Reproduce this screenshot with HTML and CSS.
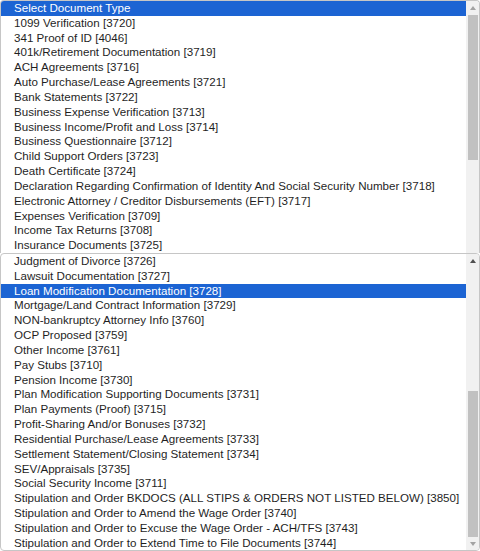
FILE: index.html
```html
<!DOCTYPE html>
<html>
<head>
<meta charset="utf-8">
<link rel="stylesheet" href="styles.css">
</head>
<body>
<div class="page">
  <div class="box box-top">
    <ul class="list" role="listbox">
      <li class="opt sel">Select Document Type</li>
      <li class="opt">1099 Verification [3720]</li>
      <li class="opt">341 Proof of ID [4046]</li>
      <li class="opt">401k/Retirement Documentation [3719]</li>
      <li class="opt">ACH Agreements [3716]</li>
      <li class="opt">Auto Purchase/Lease Agreements [3721]</li>
      <li class="opt">Bank Statements [3722]</li>
      <li class="opt">Business Expense Verification [3713]</li>
      <li class="opt">Business Income/Profit and Loss [3714]</li>
      <li class="opt">Business Questionnaire [3712]</li>
      <li class="opt">Child Support Orders [3723]</li>
      <li class="opt">Death Certificate [3724]</li>
      <li class="opt">Declaration Regarding Confirmation of Identity And Social Security Number [3718]</li>
      <li class="opt">Electronic Attorney / Creditor Disbursements (EFT) [3717]</li>
      <li class="opt">Expenses Verification [3709]</li>
      <li class="opt">Income Tax Returns [3708]</li>
      <li class="opt">Insurance Documents [3725]</li>
    </ul>
    <div class="scrollbar">
      <div class="sb-btn"><span class="arrow up disabled"></span></div>
      <div class="thumb thumb-top"></div>
      <div class="sb-fill"></div>
    </div>
  </div>
  <div class="box box-bottom">
    <ul class="list" role="listbox">
      <li class="opt">Judgment of Divorce [3726]</li>
      <li class="opt">Lawsuit Documentation [3727]</li>
      <li class="opt sel">Loan Modification Documentation [3728]</li>
      <li class="opt">Mortgage/Land Contract Information [3729]</li>
      <li class="opt">NON-bankruptcy Attorney Info [3760]</li>
      <li class="opt">OCP Proposed [3759]</li>
      <li class="opt">Other Income [3761]</li>
      <li class="opt">Pay Stubs [3710]</li>
      <li class="opt">Pension Income [3730]</li>
      <li class="opt">Plan Modification Supporting Documents [3731]</li>
      <li class="opt">Plan Payments (Proof) [3715]</li>
      <li class="opt">Profit-Sharing And/or Bonuses [3732]</li>
      <li class="opt">Residential Purchase/Lease Agreements [3733]</li>
      <li class="opt">Settlement Statement/Closing Statement [3734]</li>
      <li class="opt">SEV/Appraisals [3735]</li>
      <li class="opt">Social Security Income [3711]</li>
      <li class="opt">Stipulation and Order BKDOCS (ALL STIPS &amp; ORDERS NOT LISTED BELOW) [3850]</li>
      <li class="opt">Stipulation and Order to Amend the Wage Order [3740]</li>
      <li class="opt">Stipulation and Order to Excuse the Wage Order - ACH/TFS [3743]</li>
      <li class="opt">Stipulation and Order to Extend Time to File Documents [3744]</li>
    </ul>
    <div class="scrollbar">
      <div class="sb-btn"><span class="arrow up"></span></div>
      <div class="sb-fill"></div>
      <div class="thumb thumb-bottom"></div>
      <div class="sb-btn"><span class="arrow down disabled"></span></div>
    </div>
  </div>
</div>
</body>
</html>
```

FILE: styles.css
```css
* {
  box-sizing: border-box;
}

html, body {
  margin: 0;
  padding: 0;
  background: #ffffff;
}

body {
  font-family: "Liberation Sans", Arial, sans-serif;
  font-size: 11.6px;
  color: #1f1f1f;
}

.page {
  width: 480px;
  height: 551px;
  display: flex;
  flex-direction: column;
  overflow: hidden;
}

.box {
  display: flex;
  border: 1px solid #c6c6c6;
  background: #ffffff;
  overflow: hidden;
}

.box-top {
  height: 253px;
  border-bottom: none;
  border-radius: 4px 4px 0 0;
}

.box-bottom {
  height: 298px;
  border-radius: 4px;
}

.list {
  list-style: none;
  margin: 0;
  padding: 0;
  flex: 1;
  min-width: 0;
  overflow: hidden;
}

.opt {
  height: 14.84px;
  line-height: 14.84px;
  padding-left: 13px;
  white-space: nowrap;
  overflow: hidden;
}

.opt.sel {
  background: #1c64d3;
  color: #ffffff;
}

.scrollbar {
  width: 13px;
  flex: none;
  background: #f1f1f1;
  display: flex;
  flex-direction: column;
}

.sb-btn {
  height: 13px;
  flex: none;
  display: flex;
  align-items: center;
  justify-content: center;
}

.arrow {
  width: 0;
  height: 0;
  border-left: 3.5px solid transparent;
  border-right: 3.5px solid transparent;
}

.arrow.up {
  border-bottom: 4px solid #505050;
}

.arrow.down {
  border-top: 4px solid #505050;
}

.arrow.up.disabled {
  border-bottom-color: #a3a3a3;
}

.arrow.down.disabled {
  border-top-color: #a3a3a3;
}

.thumb {
  flex: none;
  width: 10px;
  margin-left: 1.5px;
  background: #c1c1c1;
}

.thumb-top {
  height: 145px;
  margin-top: 1px;
}

.thumb-bottom {
  height: 146px;
}

.sb-fill {
  flex: 1;
}
```
